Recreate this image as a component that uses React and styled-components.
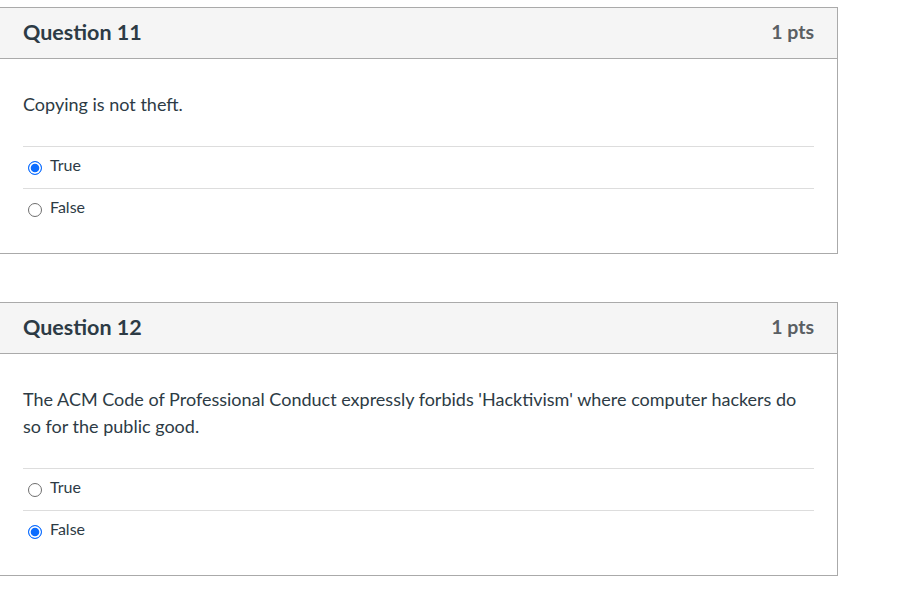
import React from 'react';
import styled, { createGlobalStyle } from 'styled-components';

const Global = createGlobalStyle`
  body {
    margin: 0;
    background: #fff;
    font-family: Lato, "Open Sans", sans-serif;
    color: #2d3b45;
  }
`

// Layout
const Page = styled.div`
  display: flex;
  flex-direction: column;
  gap: 48px;
  padding-top: 7px;
  margin-left: -1px;
`
const Card = styled.div`
  width: 839px;
  box-sizing: border-box;
  border: 1px solid #aaaaaa;
  background: #fff;
`
const Header = styled.div`
  display: flex;
  align-items: center;
  justify-content: space-between;
  height: 51px;
  padding: 0 23px 3px 23px;
  box-sizing: border-box;
  background: #f5f5f5;
  border-bottom: 1px solid #aaaaaa;
`
const Title = styled.h2`
  margin: 0;
  font-size: 21.5px;
  line-height: 26px;
  font-weight: 700;
  color: #2d3b45;
`
const Points = styled.span`
  font-size: 19.5px;
  line-height: 26px;
  font-weight: 700;
  color: #5a5f63;
`
const Body = styled.div`
  padding: 32px 23px 23px 23px;
`
const Prompt = styled.p`
  margin: 0 0 28px 0;
  font-size: 18px;
  line-height: 27px;
  color: #2d3b45;
`
const Answers = styled.ul`
  list-style: none;
  margin: 0;
  padding: 0;
`
const Answer = styled.li`
  display: flex;
  align-items: center;
  gap: 8px;
  height: 41px;
  border-top: 1px solid #dddddd;
  padding-left: 5px;
  font-size: 16px;
  line-height: 20px;
  color: #2d3b45;
`
const Label = styled.span`
  margin-top: -5px;
`
const Radio = styled.span`
  width: 14px;
  height: 14px;
  box-sizing: border-box;
  border-radius: 50%;
  border: ${p => (p.checked ? '1.5px solid #0b6cff' : '1.3px solid #6e6e6e')};
  background: ${p => (p.checked ? '#0b6cff' : '#fff')};
  box-shadow: ${p => (p.checked ? 'inset 0 0 0 1.7px #fff' : 'none')};
  flex-shrink: 0;
`

const questions = [
  {
    title: 'Question 11',
    text: 'Copying is not theft.',
    answers: ['True', 'False'],
    picked: 0,
  },
  {
    title: 'Question 12',
    text: "The ACM Code of Professional Conduct expressly forbids 'Hacktivism' where computer hackers do so for the public good.",
    answers: ['True', 'False'],
    picked: 1,
  },
];

const Question = ({ q }) => (
  <Card>
    <Header>
      <Title>{q.title}</Title>
      <Points>1 pts</Points>
    </Header>
    <Body>
      <Prompt>{q.text}</Prompt>
      <Answers>
        {q.answers.map((a, key) => (
          <Answer key={key}>
            <Radio checked={key === q.picked} />
            <Label>{a}</Label>
          </Answer>
        ))}
      </Answers>
    </Body>
  </Card>
);

const App = () => (
  <>
    <Global />
    <Page>
      {questions.map((q, key) => (
        <Question key={key} q={q} />
      ))}
    </Page>
  </>
);

export default App;
